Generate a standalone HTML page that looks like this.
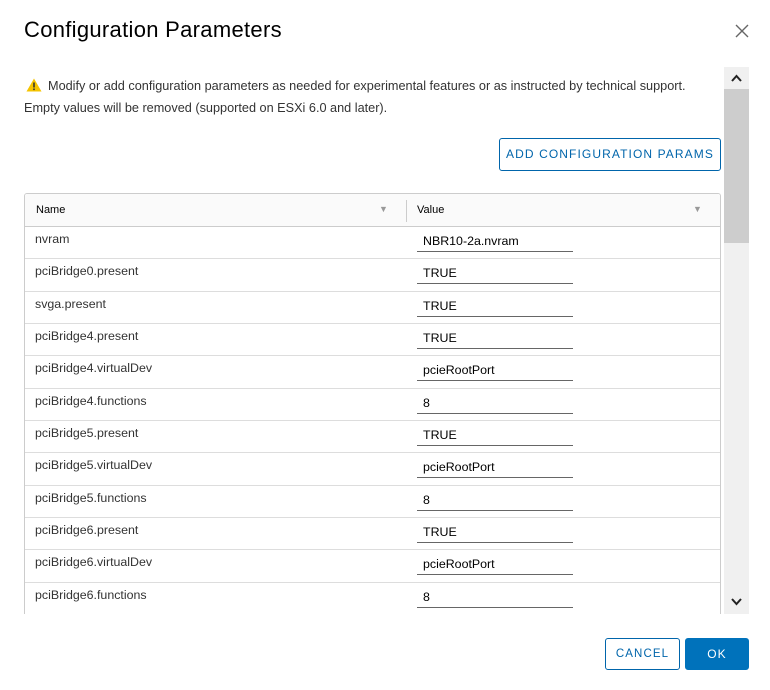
<!DOCTYPE html>
<html><head><style>
*{box-sizing:border-box;margin:0;padding:0}
body{width:770px;height:690px;background:#fff;font-family:"Liberation Sans",sans-serif;color:#333;position:relative;overflow:hidden}
.title{position:absolute;left:24px;top:17px;font-size:22px;color:#000;letter-spacing:.3px}
.close{position:absolute;left:735px;top:24px;width:14px;height:14px}
.msg{position:absolute;left:24px;top:75px;font-size:12.7px;line-height:22px;color:#333}
.sb{position:absolute;left:724px;top:67px;width:25px;height:547px;background:#f0f0f0}
.thumb{position:absolute;left:724px;top:89px;width:25px;height:154px;background:#cdcdcd}
.btn{position:absolute;border:1px solid #0065ab;border-radius:3px;color:#0065ab;font-size:12px;letter-spacing:1.1px;text-align:center}
.tbl{position:absolute;left:24px;top:193px;width:697px;height:430px;border:1px solid #ccc;border-bottom:none;border-radius:3px 3px 0 0;overflow:hidden}
.hdr{height:33px;background:#fafafa;border-bottom:1px solid #ccc;position:relative;font-size:11px;color:#000}
.row{height:32.35px;border-bottom:1px solid #ddd;position:relative;font-size:12.4px}
.n{position:absolute;left:10px;top:5px}
.v{position:absolute;left:392px;top:7px;width:156px;border-bottom:1px solid #666;padding:0 0 3px 6px;color:#000}
</style></head><body>
<div class="title">Configuration Parameters</div>
<svg class="close" viewBox="0 0 14 14"><path d="M1 1L13 13M13 1L1 13" stroke="#666" stroke-width="1.4"/></svg>
<div class="msg"><svg width="16" height="14" viewBox="0 0 16 14" style="vertical-align:-2px;margin-right:6px;margin-left:2px"><path d="M8 0.5L15.5 13.5H0.5Z" fill="#f5c400"/><rect x="7.2" y="4.5" width="1.6" height="5" fill="#333"/><rect x="7.2" y="10.5" width="1.6" height="1.6" fill="#333"/></svg>Modify or add configuration parameters as needed for experimental features or as instructed by technical support.<br>Empty values will be removed (supported on ESXi 6.0 and later).</div>
<div class="sb"></div><div class="thumb"></div>
<svg style="position:absolute;left:730px;top:73px" width="13" height="10" viewBox="0 0 13 10"><path d="M2 8L6.5 3L11 8" stroke="#222" stroke-width="2" fill="none"/></svg>
<svg style="position:absolute;left:730px;top:597px" width="13" height="10" viewBox="0 0 13 10"><path d="M2 2L6.5 7L11 2" stroke="#222" stroke-width="2" fill="none"/></svg>
<div class="btn" style="left:499px;top:138px;width:222px;height:33px;line-height:31px">ADD CONFIGURATION PARAMS</div>
<div class="tbl">
<div class="hdr"><span style="position:absolute;left:11px;top:10px">Name</span><span style="position:absolute;left:354px;top:10px;color:#999;font-size:9px">&#9660;</span><div style="position:absolute;left:381px;top:6px;height:22px;border-left:1px solid #ccc"></div><span style="position:absolute;left:392px;top:10px">Value</span><span style="position:absolute;left:668px;top:10px;color:#999;font-size:9px">&#9660;</span></div>
<div class="row"><span class="n">nvram</span><span class="v">NBR10-2a.nvram</span></div>
<div class="row"><span class="n">pciBridge0.present</span><span class="v">TRUE</span></div>
<div class="row"><span class="n">svga.present</span><span class="v">TRUE</span></div>
<div class="row"><span class="n">pciBridge4.present</span><span class="v">TRUE</span></div>
<div class="row"><span class="n">pciBridge4.virtualDev</span><span class="v">pcieRootPort</span></div>
<div class="row"><span class="n">pciBridge4.functions</span><span class="v">8</span></div>
<div class="row"><span class="n">pciBridge5.present</span><span class="v">TRUE</span></div>
<div class="row"><span class="n">pciBridge5.virtualDev</span><span class="v">pcieRootPort</span></div>
<div class="row"><span class="n">pciBridge5.functions</span><span class="v">8</span></div>
<div class="row"><span class="n">pciBridge6.present</span><span class="v">TRUE</span></div>
<div class="row"><span class="n">pciBridge6.virtualDev</span><span class="v">pcieRootPort</span></div>
<div class="row"><span class="n">pciBridge6.functions</span><span class="v">8</span></div>
</div>
<div style="position:absolute;left:0;top:614px;width:770px;height:76px;background:#fff"></div>
<div class="btn" style="left:605px;top:638px;width:75px;height:32px;line-height:30px;font-size:11.5px">CANCEL</div>
<div class="btn" style="left:685px;top:638px;width:64px;height:32px;line-height:30px;background:#0072bb;border-color:#0072bb;color:#fff">OK</div>
</body></html>
